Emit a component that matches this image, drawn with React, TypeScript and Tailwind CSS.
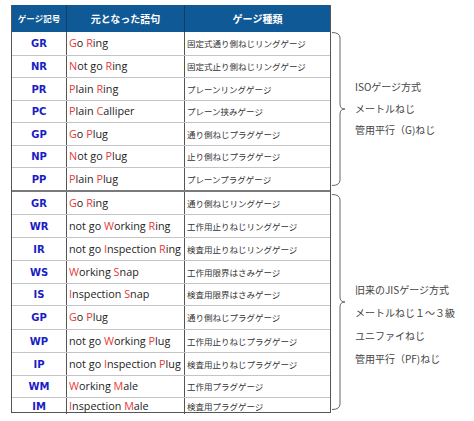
import React from "react";

type Row = { code: string; words: [string, boolean][]; kind: string; h: number };

const R = (s: string): [string, boolean] => [s, true];
const N = (s: string): [string, boolean] => [s, false];

const group1: Row[] = [
  { code: "GR", words: [R("G"), N("o "), R("R"), N("ing")], kind: "固定式通り側ねじリングゲージ", h: 23 },
  { code: "NR", words: [R("N"), N("ot go "), R("R"), N("ing")], kind: "固定式止り側ねじリングゲージ", h: 22 },
  { code: "PR", words: [R("P"), N("lain "), R("R"), N("ing")], kind: "プレーンリングゲージ", h: 23 },
  { code: "PC", words: [R("P"), N("lain "), R("C"), N("alliper")], kind: "プレーン挟みゲージ", h: 22 },
  { code: "GP", words: [R("G"), N("o "), R("P"), N("lug")], kind: "通り側ねじプラグゲージ", h: 23 },
  { code: "NP", words: [R("N"), N("ot go "), R("P"), N("lug")], kind: "止り側ねじプラグゲージ", h: 22 },
  { code: "PP", words: [R("P"), N("lain "), R("P"), N("lug")], kind: "プレーンプラグゲージ", h: 23 },
];

const group2: Row[] = [
  { code: "GR", words: [R("G"), N("o "), R("R"), N("ing")], kind: "通り側ねじリングゲージ", h: 22 },
  { code: "WR", words: [N("not go "), R("W"), N("orking "), R("R"), N("ing")], kind: "工作用止りねじリングゲージ", h: 23 },
  { code: "IR", words: [N("not go "), R("I"), N("nspection "), R("R"), N("ing")], kind: "検査用止りねじリングゲージ", h: 23 },
  { code: "WS", words: [R("W"), N("orking "), R("S"), N("nap")], kind: "工作用限界はさみゲージ", h: 23 },
  { code: "IS", words: [R("I"), N("nspection "), R("S"), N("nap")], kind: "検査用限界はさみゲージ", h: 22 },
  { code: "GP", words: [R("G"), N("o "), R("P"), N("lug")], kind: "通り側ねじプラグゲージ", h: 24 },
  { code: "WP", words: [N("not go "), R("W"), N("orking "), R("P"), N("lug")], kind: "工作用止りねじプラグゲージ", h: 23 },
  { code: "IP", words: [N("not go "), R("I"), N("nspection "), R("P"), N("lug")], kind: "検査用止りねじプラグゲージ", h: 23 },
  { code: "WM", words: [R("W"), N("orking "), R("M"), N("ale")], kind: "工作用プラグゲージ", h: 22 },
  { code: "IM", words: [R("I"), N("nspection "), R("M"), N("ale")], kind: "検査用プラグゲージ", h: 15 },
];

function TableRow({ r, first }: { r: Row; first: boolean }) {
  return (
    <div
      className={`grid grid-cols-[54px_118px_146px] ${first ? "" : "border-t border-[#c4c4c4]"}`}
      style={{ height: r.h }}
    >
      <div className="flex items-center justify-center font-['DejaVu_Sans',sans-serif] text-[10px] font-bold text-[#1c1cc4]">
        {r.code}
      </div>
      <div className="flex items-center border-l border-[#555] pl-[2px] font-['Open_Sans',sans-serif] text-[10.8px] text-[#222] whitespace-pre">
        <span>
          {r.words.map(([t, red], i) => (
            <span key={i} className={red ? "text-[#e53a3a]" : ""}>
              {t}
            </span>
          ))}
        </span>
      </div>
      <div className="flex items-center border-l border-[#555] pl-[2px] font-['Noto_Sans_CJK_JP',sans-serif] text-[8.5px] text-[#333] whitespace-nowrap">
        {r.kind}
      </div>
    </div>
  );
}

function Brace({ top, h }: { top: number; h: number }) {
  const m = h / 2;
  const d = `M 1 0.5 Q 9 0.5 9 6 L 9 ${m - 5} Q 9 ${m} 14 ${m} Q 9 ${m} 9 ${m + 5} L 9 ${h - 6} Q 9 ${h - 0.5} 1 ${h - 0.5}`;
  return (
    <svg width={16} height={h} className="absolute left-0" style={{ top }} viewBox={`0 0 16 ${h}`}>
      <path d={d} fill="none" stroke="#666" strokeWidth={1} />
    </svg>
  );
}

export default function App() {
  return (
    <div className="flex bg-white pt-[5px] pl-[11px] w-[474px] h-[421px]">
      <div className="w-[320px] border-l border-r border-b border-[#555] self-start">
        <div className="grid grid-cols-[54px_118px_146px] h-[27px] bg-[#0f5a96] text-white font-['Noto_Sans_CJK_JP',sans-serif] font-bold">
          <div className="flex items-center justify-center text-[8.5px]">ゲージ記号</div>
          <div className="flex items-center justify-center border-l border-[#163c62] text-[10px]">元となった語句</div>
          <div className="flex items-center justify-center border-l border-[#163c62] text-[10px]">ゲージ種類</div>
        </div>
        <div className="flex flex-col">
          {group1.map((r, i) => (
            <TableRow key={"a" + i} r={r} first={i === 0} />
          ))}
        </div>
        <div className="h-[2px] bg-[#7a7a7a]" />
        <div className="flex flex-col">
          {group2.map((r, i) => (
            <TableRow key={"b" + i} r={r} first={i === 0} />
          ))}
        </div>
      </div>
      <div className="flex flex-col pt-[27px] font-['Noto_Sans_CJK_JP',sans-serif] text-[10px] text-[#444]">
        <div className="relative h-[158px] pl-[24px] pt-[44px] leading-[21.5px]">
          <Brace top={0} h={154} />
          <div>ISOゲージ方式</div>
          <div>メートルねじ</div>
          <div>管用平行（G)ねじ</div>
        </div>
        <div className="h-[2px]" />
        <div className="relative h-[219px] pl-[24px] pt-[86px] leading-[23px]">
          <Brace top={2} h={216} />
          <div>旧来のJISゲージ方式</div>
          <div>メートルねじ１～３級</div>
          <div>ユニファイねじ</div>
          <div>管用平行（PF)ねじ</div>
        </div>
      </div>
    </div>
  );
}
